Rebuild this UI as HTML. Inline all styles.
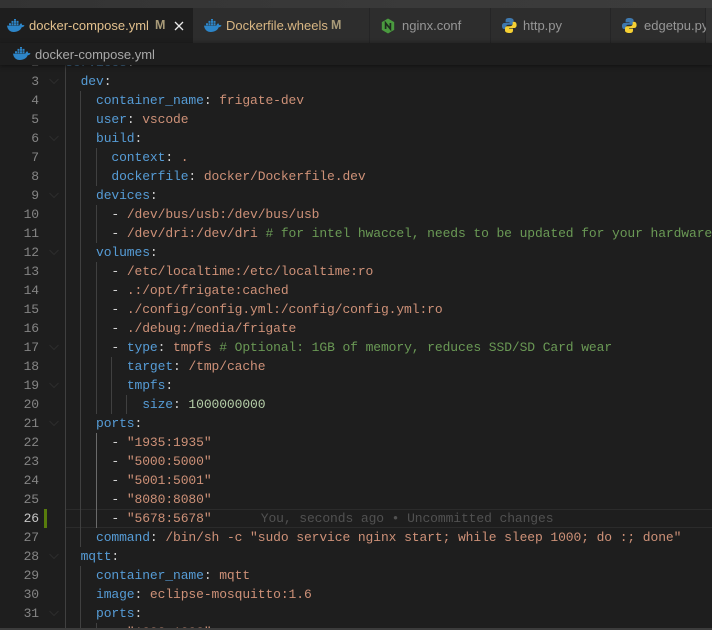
<!DOCTYPE html>
<html><head><meta charset="utf-8"><style>
html,body{margin:0;padding:0;background:#1e1e1e}
#r{position:relative;width:712px;height:630px;overflow:hidden;background:#1e1e1e}
#r div{position:absolute}
.tab{top:8px;height:35px;background:#2d2d2d;border-right:1px solid #252526;box-sizing:border-box}
.t{font:13px/35px "Liberation Sans",sans-serif;white-space:nowrap;top:8px;color:#969696}
.l{left:65.2px;height:19px;font:13px/19px "Liberation Mono",monospace;letter-spacing:-.1px;white-space:pre;color:#d4d4d4}
.n{left:10px;width:29px;height:19px;text-align:right;font:13px/19px "Liberation Mono",monospace;letter-spacing:-.1px;color:#858585}
.g{width:1px;background:#404040}
i{font-style:normal}
.k{color:#569cd6}.s{color:#ce9178}.c{color:#6a9955}.m{color:#b5cea8}
svg{position:absolute}
</style></head><body><div id="r">
<svg width="0" height="0" style="position:absolute"><defs>
<g id="dk"><path fill="#2d85c8" d="M0 6.6h12.3c.5-1.500 1.300-2.300 2-2.400.5.700.8 1.300.8 2 .9-.3 1.700-.2 2.400.3-.6 1.200-1.600 1.700-2.800 1.800C13.500 11.500 10.500 13 6.800 13 3 13 .6 10.600 0 6.600z"/><path fill="#2d85c8" d="M2 4.200h2v2H2zM4.500 4.200h2v2h-2zM7 4.200h2v2H7zM9.500 4.200h2v2h-2zM4.500 1.900h2v2h-2zM7 1.900h2v2H7zM9.500 1.900h2v2h-2zM7 -.4h2v2H7z"/></g>
<g id="py"><path fill="#3f78ad" d="M7.300 0C4 0 3.600 1.300 3.600 2.800V4.400H7.500V5H2.400C.8 5 0 6.200 0 8s.8 3.100 2.300 3.100H3.900V9.200c0-1.400 1.100-2.400 2.500-2.400h3.100c1.200 0 2.100-.9 2.100-2.100V2.500C11.600.9 9.800 0 7.300 0z"/><path fill="#f5d033" d="M7.300 15c3.300 0 3.700-1.300 3.700-2.800v-1.600H7.100V10h5.100c1.600 0 2.400-1.200 2.400-3s-.8-3.100-2.300-3.100h-1.600v1.900c0 1.400-1.100 2.400-2.500 2.400H5.100C3.900 8.200 3 9.100 3 10.300v2.200C3 14.100 4.800 15 7.300 15z"/></g>
</defs></svg>

<div style="left:0;top:0;width:712px;height:8px;background:linear-gradient(90deg,#333 0,#3a3a3a 60%,#3c3c3c 100%)"></div>
<div style="left:0;top:8px;width:712px;height:35px;background:#333"></div>
<div style="left:0;top:43px;width:712px;height:22px;background:#1e1e1e;box-shadow:0 1px 4px #111;z-index:3"></div>

<div class="tab" style="left:0;width:193px;background:#1e1e1e;border:0"></div>
<div class="tab" style="left:193px;width:177px"></div>
<div class="tab" style="left:370px;width:121px"></div>
<div class="tab" style="left:491px;width:120px"></div>
<div class="tab" style="left:611px;width:95px"></div>

<svg style="left:7px;top:19px" width="18" height="14"><use href="#dk"/></svg>
<div class="t" style="left:29px;color:#e2c08d">docker-compose.yml</div>
<div class="t" style="left:155px;color:#a89a78;font-weight:bold;font-size:12.500px">M</div>
<svg style="left:173px;top:20px" width="12" height="12"><path d="M2 2l8 8M10 2l-8 8" stroke="#e8e8e8" stroke-width="1.300" fill="none"/></svg>

<svg style="left:204px;top:19px" width="18" height="14"><use href="#dk"/></svg>
<div class="t" style="left:226px;color:#d8b683">Dockerfile.wheels</div>
<div class="t" style="left:331px;color:#a89a78;font-weight:bold;font-size:12.500px">M</div>

<svg style="left:381px;top:18px" width="14" height="16"><path fill="#4a9a3f" d="M7 .5l6.200 3.600v7.800L7 15.500.8 11.900V4.100z"/><path d="M4.600 11V5l4.800 6V5" stroke="#1e2a1e" stroke-width="1.700" fill="none"/></svg>
<div class="t" style="left:402px">nginx.conf</div>

<svg style="left:502px;top:18px" width="15" height="16"><use href="#py"/></svg>
<div class="t" style="left:523px">http.py</div>

<svg style="left:622px;top:18px" width="15" height="16"><use href="#py"/></svg>
<div style="left:644px;top:8px;width:62px;height:35px;overflow:hidden"><div class="t" style="left:0;top:0">edgetpu.py</div></div>

<svg style="left:13px;top:47px;z-index:4" width="18" height="14"><use href="#dk"/></svg>
<div class="t" style="left:35px;top:37px;color:#a9a9a9;z-index:4">docker-compose.yml</div>

<!-- current line -->
<div style="left:66px;top:509px;width:646px;height:17px;border:1px solid #2b2b2b;border-width:1px 0"></div>
<div style="left:44px;top:509px;width:3px;height:19px;background:#587c0c"></div>
<div style="left:0;top:628px;width:712px;height:2px;background:#3c3c3c;z-index:5"></div>

<!-- indent guides -->
<div class="g" style="left:65px;top:65px;height:563px"></div>
<div class="g" style="left:80px;top:91px;height:456px"></div>
<div class="g" style="left:80px;top:566px;height:62px"></div>
<div class="g" style="left:96px;top:148px;height:38px"></div>
<div class="g" style="left:96px;top:205px;height:38px"></div>
<div class="g" style="left:96px;top:262px;height:152px"></div>
<div class="g" style="left:96px;top:433px;height:95px;background:#6a6a6a"></div>
<div class="g" style="left:96px;top:623px;height:5px"></div>
<div class="g" style="left:111px;top:357px;height:57px"></div>
<div class="g" style="left:126px;top:395px;height:19px"></div>

<!-- fold chevrons -->
<svg style="left:48px;top:72px" width="12" height="560" fill="none" stroke="#2c2c2c" stroke-width="1">
<path d="M1.500 7l4.500 4.500L10.500 7M1.500 64l4.500 4.500L10.500 64M1.500 121l4.500 4.500L10.500 121M1.500 178l4.500 4.500L10.500 178M1.500 273l4.500 4.500L10.500 273M1.500 311l4.500 4.500L10.500 311M1.500 349l4.500 4.500L10.500 349M1.500 482l4.500 4.500L10.500 482M1.500 539l4.500 4.500L10.500 539"/>
</svg>

<!-- line numbers -->
<div class="n" style="top:53px">2</div>
<div class="n" style="top:72px">3</div>
<div class="n" style="top:91px">4</div>
<div class="n" style="top:110px">5</div>
<div class="n" style="top:129px">6</div>
<div class="n" style="top:148px">7</div>
<div class="n" style="top:167px">8</div>
<div class="n" style="top:186px">9</div>
<div class="n" style="top:205px">10</div>
<div class="n" style="top:224px">11</div>
<div class="n" style="top:243px">12</div>
<div class="n" style="top:262px">13</div>
<div class="n" style="top:281px">14</div>
<div class="n" style="top:300px">15</div>
<div class="n" style="top:319px">16</div>
<div class="n" style="top:338px">17</div>
<div class="n" style="top:357px">18</div>
<div class="n" style="top:376px">19</div>
<div class="n" style="top:395px">20</div>
<div class="n" style="top:414px">21</div>
<div class="n" style="top:433px">22</div>
<div class="n" style="top:452px">23</div>
<div class="n" style="top:471px">24</div>
<div class="n" style="top:490px">25</div>
<div class="n" style="top:509px;color:#c6c6c6">26</div>
<div class="n" style="top:528px">27</div>
<div class="n" style="top:547px">28</div>
<div class="n" style="top:566px">29</div>
<div class="n" style="top:585px">30</div>
<div class="n" style="top:604px">31</div>

<!-- code -->
<div class="l" style="top:53px"><i class="k">services</i>:</div>
<div class="l" style="top:72px">  <i class="k">dev</i>:</div>
<div class="l" style="top:91px">    <i class="k">container_name</i>: <i class="s">frigate-dev</i></div>
<div class="l" style="top:110px">    <i class="k">user</i>: <i class="s">vscode</i></div>
<div class="l" style="top:129px">    <i class="k">build</i>:</div>
<div class="l" style="top:148px">      <i class="k">context</i>: <i class="s">.</i></div>
<div class="l" style="top:167px">      <i class="k">dockerfile</i>: <i class="s">docker/Dockerfile.dev</i></div>
<div class="l" style="top:186px">    <i class="k">devices</i>:</div>
<div class="l" style="top:205px">      - <i class="s">/dev/bus/usb:/dev/bus/usb</i></div>
<div class="l" style="top:224px">      - <i class="s">/dev/dri:/dev/dri</i> <i class="c"># for intel hwaccel, needs to be updated for your hardware</i></div>
<div class="l" style="top:243px">    <i class="k">volumes</i>:</div>
<div class="l" style="top:262px">      - <i class="s">/etc/localtime:/etc/localtime:ro</i></div>
<div class="l" style="top:281px">      - <i class="s">.:/opt/frigate:cached</i></div>
<div class="l" style="top:300px">      - <i class="s">./config/config.yml:/config/config.yml:ro</i></div>
<div class="l" style="top:319px">      - <i class="s">./debug:/media/frigate</i></div>
<div class="l" style="top:338px">      - <i class="k">type</i>: <i class="s">tmpfs</i> <i class="c"># Optional: 1GB of memory, reduces SSD/SD Card wear</i></div>
<div class="l" style="top:357px">        <i class="k">target</i>: <i class="s">/tmp/cache</i></div>
<div class="l" style="top:376px">        <i class="k">tmpfs</i>:</div>
<div class="l" style="top:395px">          <i class="k">size</i>: <i class="m">1000000000</i></div>
<div class="l" style="top:414px">    <i class="k">ports</i>:</div>
<div class="l" style="top:433px">      - <i class="s">"1935:1935"</i></div>
<div class="l" style="top:452px">      - <i class="s">"5000:5000"</i></div>
<div class="l" style="top:471px">      - <i class="s">"5001:5001"</i></div>
<div class="l" style="top:490px">      - <i class="s">"8080:8080"</i></div>
<div class="l" style="top:509px">      - <i class="s">"5678:5678"</i>      <i style="color:#515151;margin-left:3px">You, seconds ago • Uncommitted changes</i></div>
<div class="l" style="top:528px">    <i class="k">command</i>: <i class="s">/bin/sh -c "sudo service nginx start; while sleep 1000; do :; done"</i></div>
<div class="l" style="top:547px">  <i class="k">mqtt</i>:</div>
<div class="l" style="top:566px">    <i class="k">container_name</i>: <i class="s">mqtt</i></div>
<div class="l" style="top:585px">    <i class="k">image</i>: <i class="s">eclipse-mosquitto:1.6</i></div>
<div class="l" style="top:604px">    <i class="k">ports</i>:</div>
<div class="l" style="top:623px">      - <i class="s">"1883:1883"</i></div>
</div></body></html>
